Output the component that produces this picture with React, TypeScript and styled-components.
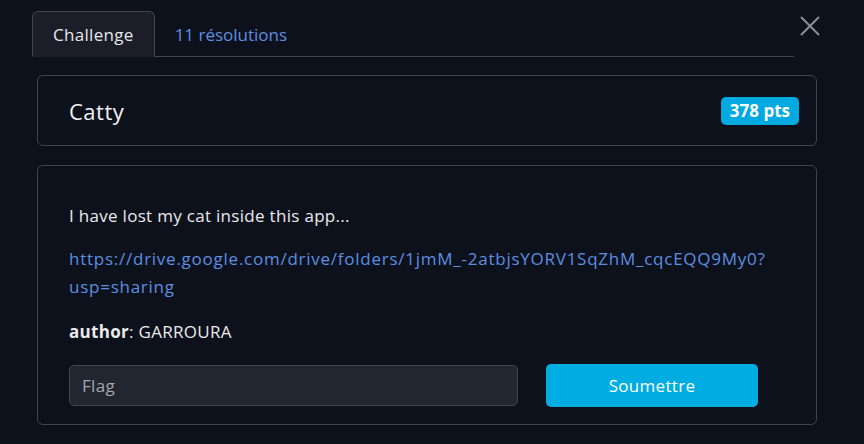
import React from 'react';
import styled, { createGlobalStyle } from 'styled-components';

const GlobalStyle = createGlobalStyle`
  html, body {
    margin: 0;
    padding: 0;
    background: #0d111c;
  }
  body {
    font-family: "Open Sans", "Liberation Sans", sans-serif;
    color: #e9eaec;
    letter-spacing: 0.3px;
  }
`;

const Modal = styled.div`
  width: 864px;
  height: 444px;
  box-sizing: border-box;
  padding: 11px 0 0 32px;
  background: #0d111c;
  overflow: hidden;
`;

const Header = styled.div`
  display: flex;
  align-items: flex-start;
  width: 790px;
`;

const Tabs = styled.div`
  display: flex;
  width: 763px;
  border-bottom: 1px solid #41444d;
`;

const Tab = styled.div<{ $active?: boolean }>`
  height: 46px;
  box-sizing: border-box;
  padding: 0 ${p => (p.$active ? 20 : 19)}px;
  display: flex;
  align-items: center;
  font-size: 17px;
  margin-bottom: -1px;
  letter-spacing: ${p => (p.$active ? 0.3 : 0)}px;
  color: ${p => (p.$active ? '#e6e7ea' : '#5b8fe0')};
  background: ${p => (p.$active ? '#1b1e29' : 'transparent')};
  border: 1px solid ${p => (p.$active ? '#41444d' : 'transparent')};
  border-bottom: ${p => (p.$active ? '1px solid #1b1e29' : 'none')};
  border-radius: 6px 6px 0 0;
  cursor: pointer;
`;

const CloseButton = styled.button`
  margin: 3px 0 0 4px;
  width: 24px;
  height: 24px;
  padding: 0;
  border: none;
  background: none;
  display: flex;
  align-items: center;
  justify-content: center;
  cursor: pointer;
`;

const Body = styled.div`
  padding: 18px 0 0 5px;
  display: flex;
  flex-direction: column;
  gap: 19px;
`;

const Card = styled.div`
  width: 780px;
  box-sizing: border-box;
  border: 1px solid #41444d;
  border-radius: 6px;
`;

const TitleCard = styled(Card)`
  height: 71px;
  padding: 0 17px 0 31px;
  display: flex;
  align-items: center;
  justify-content: space-between;
`;

const Title = styled.h1`
  margin: 0;
  font-size: 22px;
  font-weight: 400;
  letter-spacing: 0.5px;
  color: #f1f2f4;
`;

const Badge = styled.span`
  height: 28px;
  padding: 0 9px;
  display: inline-flex;
  align-items: center;
  border-radius: 5px;
  background: #00a9e0;
  color: #fff;
  font-weight: 700;
  font-size: 17px;
  letter-spacing: 0;
`;

const ContentCard = styled(Card)`
  height: 260px;
  padding: 36px 31px 0 31px;
`;

const Paragraph = styled.p<{ $gap?: number }>`
  margin: 0 0 ${p => p.$gap ?? 15}px;
  font-size: 17px;
  line-height: 28px;
  color: #e9eaec;
`;

const Link = styled.a`
  color: #5b8fe0;
  text-decoration: none;
  letter-spacing: 0.75px;
`;

const Form = styled.form`
  display: flex;
  align-items: center;
  gap: 28px;
  margin-top: 18px;
`;

const FlagInput = styled.input`
  width: 449px;
  height: 41px;
  box-sizing: border-box;
  padding: 0 12px;
  border: 1px solid #41444d;
  border-radius: 5px;
  background: #222631;
  color: #e9eaec;
  font-family: inherit;
  font-size: 17px;
  letter-spacing: 0.3px;
  outline: none;
  &::placeholder {
    color: #a3a6ad;
  }
`;

const SubmitButton = styled.button`
  width: 212px;
  height: 43px;
  border: none;
  border-radius: 5px;
  background: #00ade2;
  color: #fff;
  font-family: inherit;
  font-size: 17px;
  letter-spacing: 0.3px;
  cursor: pointer;
`;

export default function App() {
  return (
    <>
      <GlobalStyle />
      <Modal>
        <Header>
          <Tabs>
            <Tab $active>Challenge</Tab>
            <Tab>11 résolutions</Tab>
          </Tabs>
          <CloseButton aria-label="Fermer">
            <svg width="20" height="20" viewBox="0 0 20 20">
              <path d="M1 1 L19 19 M19 1 L1 19" stroke="#8b8e95" strokeWidth="2" />
            </svg>
          </CloseButton>
        </Header>
        <Body>
          <TitleCard>
            <Title>Catty</Title>
            <Badge>378 pts</Badge>
          </TitleCard>
          <ContentCard>
            <Paragraph>I have lost my cat inside this app...</Paragraph>
            <Paragraph $gap={17}>
              <Link href="#">
                https://drive.google.com/drive/folders/1jmM_-2atbjsYORV1SqZhM_cqcEQQ9My0?
                <br />
                usp=sharing
              </Link>
            </Paragraph>
            <Paragraph $gap={0}>
              <strong>author</strong>: GARROURA
            </Paragraph>
            <Form onSubmit={e => e.preventDefault()}>
              <FlagInput placeholder="Flag" />
              <SubmitButton type="submit">Soumettre</SubmitButton>
            </Form>
          </ContentCard>
        </Body>
      </Modal>
    </>
  );
}
